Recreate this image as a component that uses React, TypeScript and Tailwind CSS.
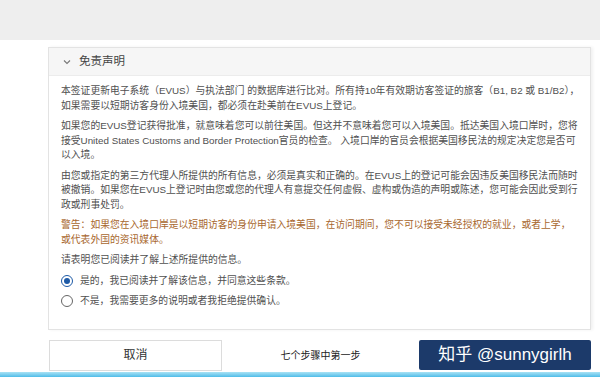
import React from "react";

const F = { fontFamily: '"Liberation Sans", "Noto Sans CJK SC", sans-serif' };

function Line({ children }: { children: React.ReactNode }) {
  return <div className="whitespace-nowrap">{children}</div>;
}

export default function App() {
  return (
    <div className="relative w-[600px] h-[377px] overflow-hidden bg-white" style={F}>
      <div className="h-[40px] bg-[#eeeeee]" />
      <div className="ml-[48px] mt-[7px] w-[543px] border border-[#e3e3e3] bg-white shadow-[2px_0_3px_rgba(0,0,0,0.06)]">
        <div className="h-[28px] bg-[#f6f6f6] border-b border-[#ececec] flex items-center pl-[14px] gap-[8px] text-[11.5px] text-[#444]">
          <svg width="8" height="6" viewBox="0 0 8 6" className="mt-[1px]">
            <path d="M1 1.5 L4 4.5 L7 1.5" fill="none" stroke="#777" strokeWidth="1.1" />
          </svg>
          <span>免责声明</span>
        </div>
        <div className="pl-[12px] pr-[8px] pt-[8px] pb-[20px] text-[9.8px] leading-[14.5px] text-[#505050] flex flex-col gap-[6px]">
          <div>
            <Line>本签证更新电子系统（EVUS）与执法部门 的数据库进行比对。所有持10年有效期访客签证的旅客（B1, B2 或 B1/B2），</Line>
            <Line>如果需要以短期访客身份入境美国，都必须在赴美前在EVUS上登记。</Line>
          </div>
          <div>
            <Line>如果您的EVUS登记获得批准，就意味着您可以前往美国。但这并不意味着您可以入境美国。抵达美国入境口岸时，您将</Line>
            <Line>接受United States Customs and Border Protection官员的检查。 入境口岸的官员会根据美国移民法的规定决定您是否可</Line>
            <Line>以入境。</Line>
          </div>
          <div>
            <Line>由您或指定的第三方代理人所提供的所有信息，必须是真实和正确的。在EVUS上的登记可能会因违反美国移民法而随时</Line>
            <Line>被撤销。如果您在EVUS上登记时由您或您的代理人有意提交任何虚假、虚构或伪造的声明或陈述，您可能会因此受到行</Line>
            <Line>政或刑事处罚。</Line>
          </div>
          <div className="text-[#a8672e]">
            <Line>警告：如果您在入境口岸是以短期访客的身份申请入境美国，在访问期间，您不可以接受未经授权的就业，或者上学，</Line>
            <Line>或代表外国的资讯媒体。</Line>
          </div>
          <div>
            <Line>请表明您已阅读并了解上述所提供的信息。</Line>
          </div>
          <div className="flex flex-col gap-[5px]">
            <div className="flex items-center gap-[7px] h-[15px]">
              <span className="w-[12px] h-[12px] rounded-full border-[1.5px] border-[#1d5aa6] flex items-center justify-center">
                <span className="w-[6px] h-[6px] rounded-full bg-[#1d5aa6]" />
              </span>
              <span>是的，我已阅读并了解该信息，并同意这些条款。</span>
            </div>
            <div className="flex items-center gap-[7px] h-[15px]">
              <span className="w-[12px] h-[12px] rounded-full border-[1.5px] border-[#666]" />
              <span>不是，我需要更多的说明或者我拒绝提供确认。</span>
            </div>
          </div>
        </div>
      </div>
      <div className="ml-[49px] mt-[10px] flex items-center">
        <div className="w-[173px] h-[31px] border border-[#dcdcdc] flex items-center justify-center text-[12px] text-[#333]">
          取消
        </div>
        <div className="w-[197px] flex justify-center text-[10px] text-[#222]">七个步骤中第一步</div>
        <div className="w-[172px] h-[30px] bg-[#1c3a6a] rounded-[2px] flex items-center justify-center text-[17px] text-white">
          知乎 @sunnygirlh
        </div>
      </div>
      <div className="absolute left-0 right-0 bottom-0 h-[5px] bg-gradient-to-b from-[#a8e2f5] to-[#4cbde8]" />
    </div>
  );
}
